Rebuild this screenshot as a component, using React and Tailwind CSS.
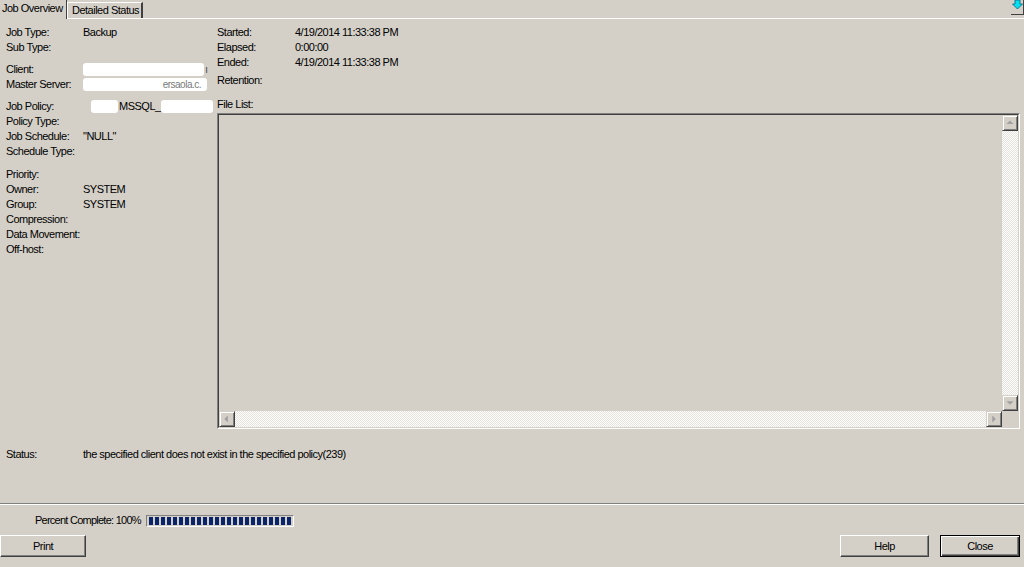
import React from 'react';

const font = { fontFamily: '"Liberation Sans", Arial, sans-serif' };

function Row({ label, children, className = '', labelW = 'w-[77px]' }) {
  return (
    <div className={`flex h-[15px] items-center whitespace-nowrap ${className}`}>
      <span className={`${labelW} shrink-0`}>{label}</span>
      <span className="flex items-center">{children}</span>
    </div>
  );
}

function Redacted({ className = '', children }) {
  return <span className={`inline-flex h-[13px] items-center bg-white rounded-[3px] ${className}`}>{children}</span>;
}

function ArrowBtn({ dir, className = '' }) {
  const paths = {
    up: 'M4 9 L8 5 L12 9 Z',
    down: 'M4 6 L8 10 L12 6 Z',
    left: 'M9 4 L5 8 L9 12 Z',
    right: 'M6 4 L10 8 L6 12 Z',
  };
  return (
    <div className={`w-[16px] h-[16px] shrink-0 bg-[#d4d0c8] border border-t-[#d4d0c8] border-l-[#d4d0c8] border-r-[#404040] border-b-[#404040] shadow-[inset_1px_1px_0_#fff,inset_-1px_-1px_0_#808080] flex items-center justify-center ${className}`}>
      <svg width="14" height="14" viewBox="0 0 16 16">
        <path d={paths[dir]} fill="#a0a0a0" />
      </svg>
    </div>
  );
}

function Button({ children, className = '', primary = false }) {
  return (
    <button
      className={`h-[22px] bg-[#d4d0c8] text-[11px] text-black tracking-[-0.5px] ${primary ? 'border border-black shadow-[inset_1px_1px_0_#fff,inset_-1px_-1px_0_#404040,inset_-2px_-2px_0_#808080]' : 'border border-t-white border-l-white border-r-[#404040] border-b-[#404040] shadow-[inset_-1px_-1px_0_#808080]'} ${className}`}
    >
      {children}
    </button>
  );
}

export default function App() {
  const dither = 'bg-[repeating-conic-gradient(#ffffff_0_25%,#e4e1db_0_50%)] bg-[length:2px_2px]';
  return (
    <div className="w-full h-[567px] bg-[#d4d0c8] text-black text-[11px] tracking-[-0.5px] flex flex-col overflow-hidden leading-none" style={font}>
      {/* Tab strip */}
      <div className="relative h-[19px] flex items-end shrink-0 whitespace-nowrap">
        <div className="absolute left-0 right-0 bottom-0 h-px bg-white" />
        <div className="relative z-10 h-[19px] w-[67px] bg-[#d4d0c8] border-r border-[#404040] flex items-center pl-[2px] pb-[2px]">
          Job Overview
        </div>
        <div className="relative h-[16px] w-[76px] border-l border-t border-white border-r-2 border-r-[#404040] flex items-center pl-[4px] pb-[1px] mb-[1px]">
          Detailed Status
        </div>
        <div className="absolute right-0 top-0 w-[13px] h-[15px] border-b border-r border-[#404040] bg-[#d4d0c8] flex items-start justify-center">
          <svg width="11" height="10" viewBox="0 0 11 10">
            <path d="M3 0 L8 0 L8 4 L10.5 4 L5.5 9 L0.5 4 L3 4 Z" fill="#00e0f0" stroke="#006080" strokeWidth="0.8" />
          </svg>
        </div>
      </div>

      {/* Upper area */}
      <div className="flex h-[414px] shrink-0 pt-[6px]">
        {/* Left column */}
        <div className="w-[217px] shrink-0 pl-[6px] flex flex-col">
          <Row label="Job Type:">Backup</Row>
          <Row label="Sub Type:" />
          <Row label="Client:" className="mt-[7px]">
            <Redacted className="w-[121px]" />
            <span className="ml-px text-[#555]">ı</span>
          </Row>
          <Row label="Master Server:">
            <Redacted className="w-[124px] justify-end pr-[6px] text-[#7a7a7a] text-[10px]">ersaola.c.</Redacted>
          </Row>
          <Row label="Job Policy:" className="mt-[7px]">
            <Redacted className="w-[27px] ml-[8px]" />
            <span className="ml-px">MSSQL_</span>
            <Redacted className="w-[52px]" />
          </Row>
          <Row label="Policy Type:" />
          <Row label="Job Schedule:">"NULL"</Row>
          <Row label="Schedule Type:" />
          <Row label="Priority:" className="mt-[8px]" />
          <Row label="Owner:">SYSTEM</Row>
          <Row label="Group:">SYSTEM</Row>
          <Row label="Compression:" />
          <Row label="Data Movement:" />
          <Row label="Off-host:" />
        </div>

        {/* Right column */}
        <div className="flex-1 flex flex-col pr-[4px]">
          <Row label="Started:" labelW="w-[78px]">4/19/2014 11:33:38 PM</Row>
          <Row label="Elapsed:" labelW="w-[78px]">0:00:00</Row>
          <Row label="Ended:" labelW="w-[78px]">4/19/2014 11:33:38 PM</Row>
          <Row label="Retention:" className="mt-[3px]" />
          <Row label="File List:" className="mt-[9px]" />
          <div className="mt-[1px] h-[316px] border border-t-[#808080] border-l-[#808080] border-r-white border-b-white">
            <div className="w-full h-full border border-t-[#404040] border-l-[#404040] border-r-[#d4d0c8] border-b-[#d4d0c8] flex flex-col">
              <div className="flex-1 flex">
                <div className="flex-1" />
                <div className={`w-[16px] flex flex-col ${dither}`}>
                  <ArrowBtn dir="up" />
                  <div className="flex-1" />
                  <ArrowBtn dir="down" />
                </div>
              </div>
              <div className="h-[16px] flex">
                <div className={`flex-1 flex ${dither}`}>
                  <ArrowBtn dir="left" />
                  <div className="flex-1" />
                  <ArrowBtn dir="right" />
                </div>
                <div className="w-[16px] bg-[#d4d0c8]" />
              </div>
            </div>
          </div>
        </div>
      </div>

      {/* Status */}
      <div className="h-[70px] shrink-0 pl-[6px] pt-[14px]">
        <div className="flex h-[15px] items-center whitespace-nowrap">
          <span className="w-[77px]">Status:</span>
          <span>the specified client does not exist in the specified policy(239)</span>
        </div>
      </div>

      {/* Separator */}
      <div className="h-px bg-[#808080] shrink-0" />
      <div className="h-px bg-white shrink-0" />

      {/* Progress */}
      <div className="h-[29px] shrink-0 flex items-center pl-[35px] pt-[2px] whitespace-nowrap">
        <span className="w-[111px] tracking-[-0.75px]">Percent Complete: 100%</span>
        <div className="w-[148px] h-[12px] border border-t-[#808080] border-l-[#808080] border-r-white border-b-white flex items-center gap-[2px] pl-[2px]">
          {Array.from({ length: 24 }).map((_, i) => (
            <div key={i} className="w-[4px] h-[8px] bg-[#0a246a]" />
          ))}
        </div>
      </div>

      {/* Buttons */}
      <div className="flex items-start pt-[1px]">
        <Button className="w-[86px]">Print</Button>
        <div className="flex-1" />
        <Button className="w-[89px]">Help</Button>
        <Button primary className="w-[80px] ml-[11px] mr-[4px]">Close</Button>
      </div>
    </div>
  );
}
